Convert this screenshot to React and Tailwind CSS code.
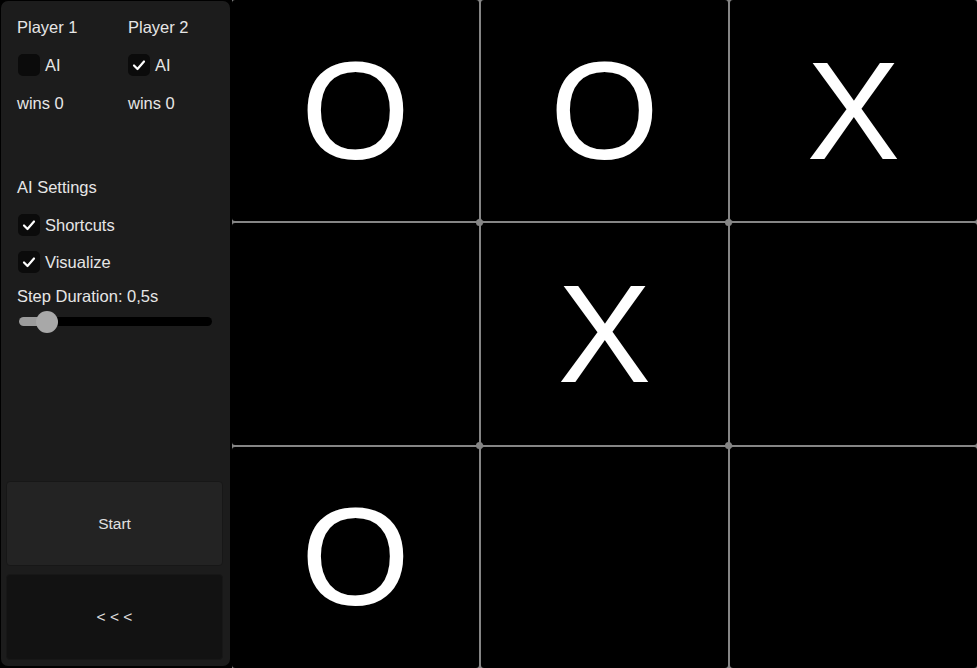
import React, { useState } from 'react';

const font = { fontFamily: '"Liberation Sans", Arial, sans-serif' };

function Check({ checked, onChange, label }) {
  return (
    <button onClick={onChange} className="flex items-center gap-[5px] text-[16.5px] text-[#e6e6e6]">
      <span className="flex h-[22px] w-[22px] items-center justify-center rounded-[5px] bg-[#0b0b0b]">
        {checked && (
          <svg width="14" height="14" viewBox="0 0 14 14" fill="none">
            <path d="M2 7.5 L5.5 11 L12 3.5" stroke="white" strokeWidth="2.2" strokeLinecap="round" strokeLinejoin="round" />
          </svg>
        )}
      </span>
      <span>{label}</span>
    </button>
  );
}

export default function App() {
  const [ai1, setAi1] = useState(false);
  const [ai2, setAi2] = useState(true);
  const [shortcuts, setShortcuts] = useState(true);
  const [visualize, setVisualize] = useState(true);
  const board = ['O', 'O', 'X', '', 'X', '', 'O', '', ''];

  return (
    <div className="flex h-[668px] w-[977px] bg-black" style={font}>
      <div className="mb-[2px] ml-[1px] mt-[1px] flex w-[229px] flex-col rounded-[7px] bg-[#1c1c1c] pb-[6px] pl-[6px] pr-[7px] text-[16.5px] text-[#e6e6e6]">
        <div className="pl-[10px] pt-[7px]">
          <div className="flex h-[38px] items-center">
            <span className="w-[111px]">Player 1</span>
            <span>Player 2</span>
          </div>
          <div className="flex h-[38px] items-center pl-[1px]">
            <div className="w-[110px]">
              <Check checked={ai1} onChange={() => setAi1(!ai1)} label="AI" />
            </div>
            <Check checked={ai2} onChange={() => setAi2(!ai2)} label="AI" />
          </div>
          <div className="flex h-[38px] items-center">
            <span className="w-[111px]">wins 0</span>
            <span>wins 0</span>
          </div>
          <div className="mt-[46px] flex h-[38px] items-center">AI Settings</div>
          <div className="flex h-[38px] items-center pl-[1px]">
            <Check checked={shortcuts} onChange={() => setShortcuts(!shortcuts)} label="Shortcuts" />
          </div>
          <div className="flex h-[36px] items-center pl-[1px]">
            <Check checked={visualize} onChange={() => setVisualize(!visualize)} label="Visualize" />
          </div>
          <div className="flex h-[32px] items-center">Step Duration: 0,5s</div>
          <div className="relative ml-[2px] mt-[5px] flex h-[9px] w-[193px] rounded-full bg-black">
            <div className="h-full w-[30px] rounded-l-full bg-[#9c9c9c]" />
            <div className="absolute left-[17px] top-[-6.5px] h-[22px] w-[22px] rounded-full bg-[#a8a8a8]" />
          </div>
        </div>
        <div className="flex-1" />
        <button className="-ml-[1px] flex h-[85px] items-center justify-center rounded-[4px] border border-[#171717] bg-[#232323] text-[15.5px] text-[#e0e0e0]">
          Start
        </button>
        <button className="-ml-[1px] mt-[8px] flex h-[86px] items-center justify-center rounded-[4px] border border-[#171717] bg-[#121212] text-[15.5px] text-[#e0e0e0]">
          &lt; &lt; &lt;
        </button>
      </div>

      <div className="relative ml-[2px] grid flex-1 grid-cols-3 grid-rows-3 gap-[2px] bg-[#858585]">
        {board.map((v, i) => (
          <div key={i} className="flex items-center justify-center rounded-[3px] bg-black text-[140px] leading-none text-white">
            {v}
          </div>
        ))}
        <span className="absolute left-[244px] top-[218.5px] h-[7px] w-[7px] rounded-full bg-[#858585]" />
        <span className="absolute left-[493px] top-[218.5px] h-[7px] w-[7px] rounded-full bg-[#858585]" />
        <span className="absolute left-[244px] top-[441.5px] h-[7px] w-[7px] rounded-full bg-[#858585]" />
        <span className="absolute left-[493px] top-[441.5px] h-[7px] w-[7px] rounded-full bg-[#858585]" />
      </div>
    </div>
  );
}
